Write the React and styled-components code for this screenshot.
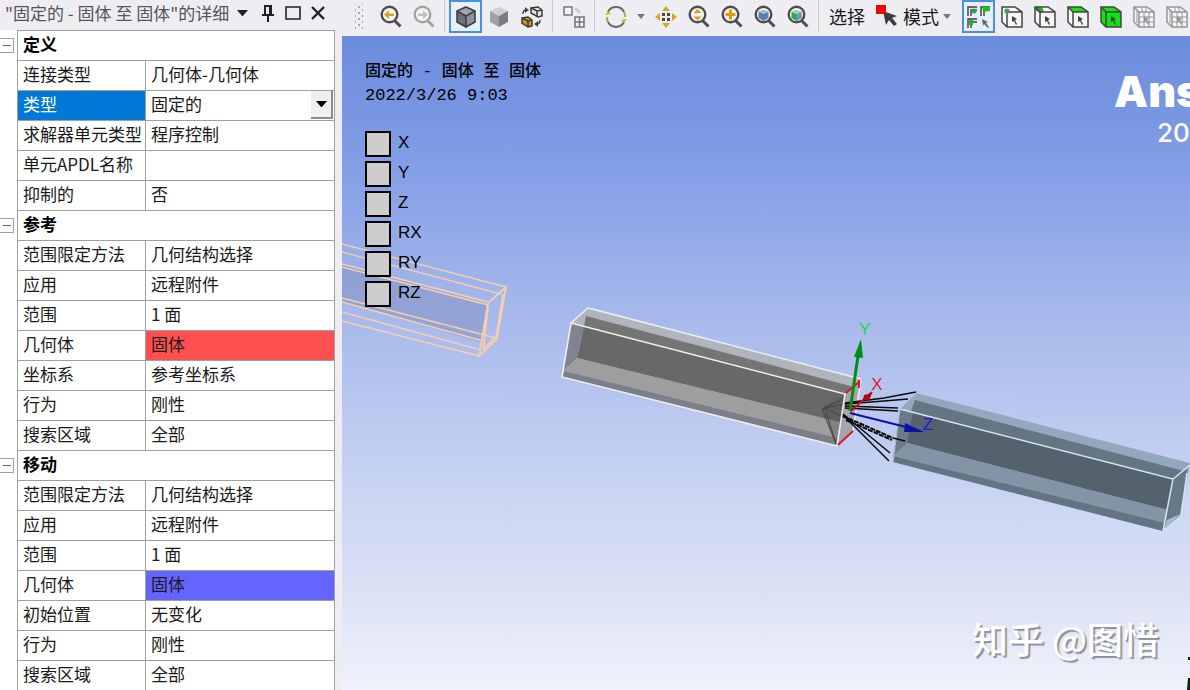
import React, { Component } from 'react'
import styled, { createGlobalStyle } from 'styled-components'

const GlobalStyle = createGlobalStyle`
  * {
    box-sizing: border-box;
  }
  body {
    margin: 0;
    background: #eeeef2;
    color: #1a1a1a;
    font-family: "Noto Sans CJK SC", "Liberation Sans", sans-serif;
  }
  button, select, input {
    font: inherit;
    color: inherit;
    margin: 0;
    padding: 0;
    border: 0;
    background: none;
  }
`

const Window = styled.div`
  display: grid;
  grid-template-columns: 342px minmax(0, 1fr);
  height: 100vh;
  overflow: hidden;
`

const Panel = styled.aside`
  display: flex;
  flex-direction: column;
  min-height: 0;
  overflow: hidden;
`

const PanelHead = styled.header`
  display: flex;
  align-items: center;
  flex: none;
  height: 30px;
  padding: 0 12px 4px 5px;
`

const PanelTitle = styled.h1`
  flex: 1;
  min-width: 0;
  margin: 0;
  overflow: hidden;
  white-space: nowrap;
  font-size: 17px;
  font-weight: 400;
  line-height: 26px;
  color: #55555a;
`

const HeadButton = styled.button`
  display: flex;
  align-items: center;
  justify-content: center;
  flex: none;
  width: 25px;
  height: 26px;
`

const DetailBody = styled.div`
  flex: 1;
  width: 335px;
  background: #fff;
`

const DetailTable = styled.table`
  width: 100%;
  table-layout: fixed;
  border-collapse: separate;
  border-spacing: 0;
  font-size: 17px;
  line-height: 25px;
  white-space: nowrap;

  th, td {
    height: 30px;
    padding: 0 0 4px 5px;
    border: solid #a0a0a0;
    border-width: 1px 0 0 1px;
    text-align: left;
    font-weight: 400;
    overflow: hidden;
  }
  th:last-child, td:last-child {
    border-right-width: 1px;
  }
`

const GutterCell = styled.td`
  && {
    border: 0;
    padding: 0;
  }
`

const GroupCell = styled.th`
  && {
    font-weight: 700;
    color: #000;
  }
`

const NameCell = styled.th`
  && {
    background: ${props => props.$active ? '#0078d7' : '#fff'};
    color: ${props => props.$active ? '#fff' : 'inherit'};
  }
`

const ValueCell = styled.td`
  background: ${props => props.$color || '#fff'};
`

const Toggle = styled.button`
  display: flex;
  align-items: center;
  justify-content: center;
  width: 14px;
  height: 15px;
  border: 1px solid #a0a0a0;
  border-left: 0;

  &::before {
    content: '';
    width: 8px;
    height: 1px;
    background: #666;
  }
`

const SelectBox = styled.div`
  display: flex;
  position: relative;

  select {
    flex: 1;
    height: 25px;
    appearance: none;
    outline: none;
  }
`

const SelectArrow = styled.span`
  position: absolute;
  top: 0;
  right: 1px;
  display: flex;
  align-items: center;
  justify-content: center;
  width: 22px;
  height: 28px;
  background: #f0f0f0;
  border: solid #8c8c8c;
  border-width: 0 2px 2px 0;
  pointer-events: none;
`

const Main = styled.main`
  display: flex;
  flex-direction: column;
  min-width: 0;
`

const Toolbar = styled.div`
  display: flex;
  flex: none;
  height: 36px;
  padding-left: 13px;
  overflow: hidden;
`

const Grip = styled.span`
  flex: none;
  width: 8px;
  height: 26px;
  margin: 4px 11px 0 0;
  background:
    radial-gradient(circle, #a8a8ad 1px, transparent 1px) 0 0 / 8px 6px,
    radial-gradient(circle, #a8a8ad 1px, transparent 1px) 4px 3px / 8px 6px;
`

const ToolButton = styled.button`
  display: flex;
  align-items: center;
  justify-content: center;
  flex: none;
  width: 33px;
  height: 33px;
  ${props => props.$active && `
    background: #e6effa;
    border: 2px solid #4a90e0;
  `}
`

const CaretButton = styled(ToolButton)`
  width: 17px;
`

const Separator = styled.span`
  flex: none;
  width: 1px;
  height: 32px;
  margin: 0 4px;
  background: #c9c9ce;
`

const ToolText = styled.span`
  flex: none;
  padding: 0 6px;
  font-size: 18px;
  line-height: 32px;
`

const ModeButton = styled.button`
  display: flex;
  align-items: center;
  flex: none;
  gap: 4px;
  width: 91px;
  height: 32px;
  padding-left: 4px;
  font-size: 18px;
  line-height: 32px;
  white-space: nowrap;
`

const Viewport = styled.section`
  position: relative;
  flex: 1;
  min-height: 0;
  overflow: hidden;
  background: linear-gradient(#6b8bdc, #7f9be5 17%, #a3b6eb 40%, #c5d1f2 66%, #dce3f5 86%, #f0f1fb);
`

const Scene = styled.svg`
  position: absolute;
  inset: 0;
  width: 100%;
  height: 100%;
`

const Annotation = styled.div`
  position: relative;
  padding: 24px 0 0 23px;
  color: #000;
`

const AnnotationTitle = styled.h2`
  margin: 0;
  font: 500 16px/24px "Liberation Mono", "Noto Sans CJK SC", monospace;
`

const AnnotationDate = styled.p`
  margin: 0 0 23px;
  font: 17px/24px "Liberation Mono", monospace;
`

const Dof = styled.label`
  display: flex;
  gap: 7px;
  height: 30px;
  font-family: "Liberation Sans", sans-serif;
  font-size: 17px;
  line-height: 23px;

  input {
    appearance: none;
    width: 26px;
    height: 26px;
    border: 2px solid #000;
    background: #cdcdcd;
  }
`

const Brand = styled.div`
  position: absolute;
  top: 28px;
  right: 0;
  width: 76px;
  color: #fff;
  font-family: Inter, sans-serif;
  white-space: nowrap;

  strong {
    display: block;
    font-size: 43px;
    font-weight: 900;
    line-height: 54px;
  }
  span {
    display: block;
    padding-left: 43px;
    font-size: 26px;
    font-weight: 500;
    line-height: 30px;
  }
`

const Watermark = styled.div`
  position: absolute;
  right: 31px;
  bottom: 25px;
  color: #fff;
  font-size: 36px;
  font-weight: 500;
  line-height: 54px;
  text-shadow: 2px 2px 1px #8d919c;
`

const Caret = ({ size = 8, color = '#77777c' }) => (
  <svg width={size} height={size / 2 + 1} viewBox="0 0 8 5" preserveAspectRatio="none" aria-hidden="true">
    <path d="M0 0h8L4 5z" fill={color} />
  </svg>
)

const Icon = ({ children }) => (
  <svg width="24" height="24" viewBox="0 0 24 24" fill="none" aria-hidden="true">{children}</svg>
)

const Lens = ({ color = '#4a4d52', children }) => (
  <Icon>
    <path d="M15.5 15.5l6 6" stroke={color} strokeWidth="3" />
    <circle cx="10.5" cy="9.5" r="7.8" fill="#f4f3ee" stroke={color} strokeWidth="2.4" />
    {children}
  </Icon>
)

const Pointer = ({ color = '#444' }) => (
  <path d="M12 11l5 3-2 1 2 4-1 1-2-4-2 1z" fill={color} />
)

// cube of the selection filters, the picked entity is painted green
const PickCube = ({ pick, muted, many }) => {
  const line = muted ? '#96969a' : '#444'
  const green = '#12e312'
  return (
    <Icon>
      <path d="M2 2h13l7 5v15H7l-5-5z" fill={pick === 'body' ? green : '#f7f7f7'} />
      {pick === 'face' && <path d="M2 2h13l7 5H7z" fill={green} />}
      {pick === 'edge' && <path d="M2 2h7l2 5-4 1-5-3z" fill="#24b524" />}
      <path d="M2 2h13l7 5v15H7l-5-5zM7 7v15M7 7h15M15 2l7 5" stroke={line} strokeWidth="1.5" />
      {pick === 'vertex' ? <circle cx="7" cy="6" r="2.6" fill="#3f9f55" /> : <path d="M2 2l5 5" stroke={line} strokeWidth="1.5" />}
      {many && <path d="M5 5v13M10 3v4M14 3v4M12 7v15M17 7v15M7 12h15M7 17h15" stroke={line} />}
      <Pointer color={line} />
    </Icon>
  )
}

const Cube = ({ top, left, right, line }) => (
  <Icon>
    <path d="M12 2l9 4-9 5-9-5z" fill={top} />
    <path d="M3 6l9 5v11l-9-5z" fill={left} />
    <path d="M21 6l-9 5v11l9-5z" fill={right} />
    {line && <path d="M12 2l9 4v11l-9 5-9-5V6zM3 6l9 5 9-5M12 11v11" stroke={line} strokeWidth="1.6" />}
  </Icon>
)

const PrevViewIcon = () => <Lens><path d="M5 9.500l5-4v3h5v2.500h-5v3z" fill="#dba21c" /></Lens>
const NextViewIcon = () => <Lens color="#a3a3a6"><path d="M16 9.500l-5-4v3H6v2.500h5v3z" fill="#bfbfc2" /></Lens>
const ZoomIcon = () => <Lens><path d="M10.500 4l4 4h-8zM10.500 15.500l4-4h-8z" fill="#d4a017" /></Lens>
const ZoomInIcon = () => <Lens><path d="M10.500 4.500v10M5.500 9.500h10" stroke="#e09a12" strokeWidth="3" /></Lens>
const ZoomFitIcon = () => (
  <Lens>
    <path d="M5.500 7l5-2 5 2v6l-5 3-5-3z" fill="#5c7fae" />
    <path d="M5.500 7l5-2 5 2-5 2z" fill="#a4bad8" />
  </Lens>
)
const ZoomSelectedIcon = () => (
  <Lens>
    <path d="M5.500 7l5-2 5 2v6l-5 3-5-3z" fill="#28ad4b" />
    <path d="M10.500 9l5-2v6l-5 3z" fill="#7894bc" />
    <path d="M5.500 7l5-2 5 2-5 2z" fill="#a4cdb6" />
  </Lens>
)

const RandomColorIcon = () => (
  <Icon>
    <path d="M11 3l7-1 4 3v6l-4 1-7-4z" fill="#e6e6e6" stroke="#3c3c3c" strokeWidth="1.5" />
    <path d="M11 3l6 3 5-1M17 6v5" stroke="#3c3c3c" strokeWidth="1.5" />
    <path d="M2 13l6-1 4 3v6l-4 1-6-4z" fill="#c99a1c" stroke="#3c3c3c" strokeWidth="1.5" />
    <path d="M2 13l6 3 4-1M8 16v6" stroke="#3c3c3c" strokeWidth="1.5" />
    <path d="M3 9c0-3 1-4 3-4M20 15c0 3-1 4-3 4" stroke="#444" strokeWidth="1.5" />
    <path d="M5 2l4 3-4 3zM18 16l-4 3 4 3z" fill="#444" />
  </Icon>
)

const ViewportsIcon = () => (
  <Icon>
    <path d="M2 2h8v8H2z" fill="#f4f4f4" stroke="#77777a" strokeWidth="1.5" />
    <path d="M13 12h9v10h-9zM13 17h9M17.500 12v10" fill="#f4f4f4" stroke="#77777a" strokeWidth="1.6" />
    <path d="M13 3l5 5" stroke="#d0d0d3" strokeWidth="3" />
  </Icon>
)

const RotateIcon = () => (
  <Icon>
    <path d="M4 7a9 9 0 0 1 16 0M20 17a9 9 0 0 1-16 0" stroke="#65676c" strokeWidth="2" />
    <path d="M20 7a9 9 0 0 1 1 5M4 17a9 9 0 0 1-1-5" stroke="#b5a05c" strokeWidth="2" />
    <path d="M1 10l3-4 3 3zM23 14l-3 4-3-3z" fill="#e0ad28" />
  </Icon>
)

const PanIcon = () => (
  <Icon>
    <path d="M12 1l4 5H8zM12 23l4-5H8zM1 12l5-4v8zM23 12l-5-4v8z" fill="#d1a72a" />
    <path d="M8 8h3v3H8zM13 8h3v3h-3zM8 13h3v3H8zM13 13h3v3h-3z" fill="#45474c" />
    <path d="M11 7h2v10h-2zM7 11h10v2H7z" fill="#f3efe0" />
  </Icon>
)

const AutoPickIcon = () => (
  <Icon>
    <path d="M1 11V2h9M4 11V5h6M14 11V2h9M17 11V5h6M1 23v-9h9M4 23v-6h6" stroke="#3c3c3c" strokeWidth="1.4" />
    <circle cx="7" cy="6" r="2.5" fill="#2f9e4a" />
    <path d="M15 2h8v4l-7 1z" fill="#12c912" />
    <path d="M2 15h4v5H2z" fill="#24b524" />
    <path d="M15 14l6 3-2 1 3 4-1 1-4-4-1 2z" fill="#666" />
  </Icon>
)

const ModeIcon = () => (
  <svg width="24" height="24" viewBox="0 0 24 24" aria-hidden="true">
    <path d="M8 7l14 5-5 2 5 6-3 2-5-6-3 5z" fill="#3c3c3c" />
    <path d="M1 1h10v9H1z" fill="#f00808" />
  </svg>
)

const viewTools = [
  [
    { label: '上一视图', icon: <PrevViewIcon /> },
    { label: '下一视图', icon: <NextViewIcon /> }
  ],
  [
    { label: '带边着色外表面', icon: <Cube top="#a4a7aa" left="#6c6f73" right="#909396" line="#3e4043" />, active: true },
    { label: '着色外表面', icon: <Cube top="#cfcfd1" left="#a0a0a3" right="#7d7d80" /> },
    { label: '随机颜色', icon: <RandomColorIcon /> }
  ],
  [
    { label: '视区', icon: <ViewportsIcon /> }
  ],
  [
    { label: '旋转', icon: <RotateIcon />, menu: true },
    { label: '平移', icon: <PanIcon /> },
    { label: '缩放', icon: <ZoomIcon /> },
    { label: '框选缩放', icon: <ZoomInIcon /> },
    { label: '缩放至合适', icon: <ZoomFitIcon /> },
    { label: '缩放至选定', icon: <ZoomSelectedIcon /> }
  ]
]

const pickTools = [
  { label: '智能选择', icon: <AutoPickIcon /> },
  { label: '顶点', icon: <PickCube pick="vertex" /> },
  { label: '边', icon: <PickCube pick="edge" /> },
  { label: '面', icon: <PickCube pick="face" /> },
  { label: '体', icon: <PickCube pick="body" /> },
  { label: '节点', icon: <PickCube muted many /> },
  { label: '单元', icon: <PickCube muted many /> }
]

const groups = [
  {
    title: '定义',
    rows: [
      { name: '连接类型', value: '几何体-几何体' },
      { name: '类型', options: ['固定的', '回转副', '圆柱形', '平移', '球形'] },
      { name: '求解器单元类型', value: '程序控制' },
      { name: '单元APDL名称', value: '' },
      { name: '抑制的', value: '否' }
    ]
  },
  {
    title: '参考',
    rows: [
      { name: '范围限定方法', value: '几何结构选择' },
      { name: '应用', value: '远程附件' },
      { name: '范围', value: '1 面' },
      { name: '几何体', value: '固体', color: '#ff5050' },
      { name: '坐标系', value: '参考坐标系' },
      { name: '行为', value: '刚性' },
      { name: '搜索区域', value: '全部' }
    ]
  },
  {
    title: '移动',
    rows: [
      { name: '范围限定方法', value: '几何结构选择' },
      { name: '应用', value: '远程附件' },
      { name: '范围', value: '1 面' },
      { name: '几何体', value: '固体', color: '#6464ff' },
      { name: '初始位置', value: '无变化' },
      { name: '行为', value: '刚性' },
      { name: '搜索区域', value: '全部' }
    ]
  }
]

const dofs = ['X', 'Y', 'Z', 'RX', 'RY', 'RZ']

const Model = () => (
  <Scene viewBox="342 36 848 654" preserveAspectRatio="xMinYMin slice" role="img" aria-label="几何模型">
    {/* ground body, wireframe */}
    <path d="M342 265L488 304L483 343L342 301z" fill="#8795c6" opacity=".6" />
    <g fill="none" stroke="#f3cfae" strokeWidth="1.3">
      <path d="M342 244L506 287M342 252L501 294M342 264L488 302M342 267L488 305" />
      <path d="M342 298L496 338M342 302L483 341M342 312L481 350M342 321L479 356" />
      <path d="M506 287L488 303L479 356L497 339zM503 294L496 339M488 307L483 350M484 348L497 336" strokeWidth="1.8" />
    </g>

    {/* reference body */}
    <path d="M588 308L861 379L853 430L837 446L562 377L571 323z" fill="#b0b4bd" />
    <path d="M586 316L858 388L845 396L584 326z" fill="#757575" />
    <path d="M584 326L845 395L840 423L577 358z" fill="#686868" />
    <path d="M571 323L584 327L577 358L563 371z" fill="#80848e" />
    <path d="M577 358L840 422L837 438L564 371z" fill="#9e9e9e" />
    <path d="M564 371L838 438L837 446L562 377z" fill="#7c7f88" />
    <path d="M845 394L861 380L853 430L837 446z" fill="#a2a5ad" />
    <path d="M822 407L845 395L842 422L836 444z" fill="#4c4c4c" opacity=".35" />
    <path d="M845 404L822 409L836 444L825 408L845 418M822 409L841 400" fill="none" stroke="#444" />
    <path d="M571 323L588 308L861 379M571 323L562 377L837 446L845 394zM861 380L853 430" fill="none" stroke="#ededed" strokeWidth="1.6" />
    <path d="M846 393L860 381M838 445L853 431M859 380v8" fill="none" stroke="#e01820" strokeWidth="2" />

    {/* mobile body */}
    <path d="M916 393L1190 463L1181 516L1163 531L893 462L900 409z" fill="#93a8bd" />
    <path d="M915 400L1184 471L1173 479L911 411z" fill="#657584" />
    <path d="M911 411L1173 479L1168 510L907 443z" fill="#55626e" />
    <path d="M900 409L913 412L907 443L893 458z" fill="#6b7b8c" />
    <path d="M907 443L1168 510L1165 523L893 456z" fill="#8294a6" />
    <path d="M893 456L1165 523L1163 531L893 462z" fill="#647485" />
    <path d="M1173 479L1188 466L1180 514L1163 531z" fill="#677889" />
    <path d="M1167 520L1180 514L1163 531z" fill="#a7bccd" />
    <path d="M900 409L1173 479L1163 531M1173 479L1190 465M1187 473L1181 516L1163 531" fill="none" stroke="#cfe6ef" strokeWidth="1.5" />
    <path d="M900 409L893 462M900 409L916 393" fill="none" stroke="#b0c3d5" />

    {/* links between the bodies */}
    <g fill="none" stroke="#0a0a0a" strokeWidth="1.5">
      <path d="M845 403L884 398L916 392M845 404L884 401L908 399M845 406L898 408M845 408L898 411" />
      <path d="M843 415L889 461M843 414L890 453M905 441L893 438" />
      <path d="M843 416L893 438M846 420L892 440" strokeWidth="2" strokeDasharray="5 1" />
    </g>

    {/* joint coordinate system */}
    <path d="M850 411L858 356" stroke="#068c14" strokeWidth="3" />
    <path d="M861 339L863 358L854 357z" fill="#068c14" />
    <path d="M851 411L872 392" stroke="#d00c14" strokeWidth="2" />
    <path d="M864 395L872 393L869 401L863 400z" fill="#b00810" />
    <path d="M850 413L906 427" stroke="#0a12a8" strokeWidth="2.2" />
    <path d="M905 423L924 432L904 432z" fill="#0a12a8" />
    <g fontFamily="Liberation Sans, sans-serif" fontSize="17" textAnchor="middle">
      <text x="865" y="335" fill="#16d84a">Y</text>
      <text x="877" y="390" fill="#e8182c">X</text>
      <text x="928" y="430" fill="#1418e0">Z</text>
    </g>
    <path d="M1188 657h2v3h-2zM1188 678h2v12h-3z" fill="#06280c" />
  </Scene>
)

class App extends Component {

  state = {
    jointType: '固定的',
    activeRow: '类型',
    pick: '智能选择',
    closed: {}
  }

  _toggleGroup = (title) => {
    this.setState({ closed: { ...this.state.closed, [title]: !this.state.closed[title] } })
  }

  _showRow = (row) => {
    return (
      <tr key={row.name} onClick={() => this.setState({ activeRow: row.name === '类型' ? '类型' : null })}>
        <GutterCell />
        <NameCell scope="row" $active={row.name === this.state.activeRow}>{row.name}</NameCell>
        <ValueCell $color={row.color}>
          {
            row.options ?
              <SelectBox>
                <select
                  aria-label={row.name}
                  value={this.state.jointType}
                  onChange={(e) => this.setState({ jointType: e.target.value })}
                >
                  {row.options.map(item => <option key={item}>{item}</option>)}
                </select>
                <SelectArrow><Caret size={11} color="#000" /></SelectArrow>
              </SelectBox>
              :
              row.value
          }
        </ValueCell>
      </tr>
    )
  }

  _showGroup = (group) => {
    return (
      <tbody key={group.title}>
        <tr>
          <GutterCell>
            <Toggle aria-label={group.title} onClick={() => this._toggleGroup(group.title)} />
          </GutterCell>
          <GroupCell colSpan={2}>{group.title}</GroupCell>
        </tr>
        {!this.state.closed[group.title] && group.rows.map(this._showRow)}
      </tbody>
    )
  }

  _showPanel = () => {
    return (
      <Panel>
        <PanelHead>
          <PanelTitle>"固定的 - 固体 至 固体"的详细信息</PanelTitle>
          <HeadButton aria-label="菜单"><Caret size={11} color="#222" /></HeadButton>
          <HeadButton aria-label="固定">
            <svg width="14" height="18" viewBox="0 0 14 18" fill="none" stroke="#222" strokeWidth="2">
              <path d="M4 11V2h6v9M1 11h12M7 11v7M9 2v9" />
            </svg>
          </HeadButton>
          <HeadButton aria-label="最大化">
            <svg width="16" height="14" viewBox="0 0 16 14" fill="none" stroke="#222">
              <path d="M1 1h14v12H1z" strokeWidth="1.6" />
            </svg>
          </HeadButton>
          <HeadButton aria-label="关闭">
            <svg width="14" height="14" viewBox="0 0 14 14" stroke="#222" strokeWidth="2.4">
              <path d="M1 1l12 12M13 1L1 13" />
            </svg>
          </HeadButton>
        </PanelHead>
        <DetailBody>
          <DetailTable>
            <colgroup>
              <col width="17" />
              <col width="128" />
              <col />
            </colgroup>
            {groups.map(this._showGroup)}
          </DetailTable>
        </DetailBody>
      </Panel>
    )
  }

  _showToolbar = () => {
    return (
      <Toolbar role="toolbar">
        <Grip />
        {viewTools.map((tools, index) => (
          <React.Fragment key={index}>
            {tools.map(item => (
              <React.Fragment key={item.label}>
                <ToolButton aria-label={item.label} $active={item.active}>{item.icon}</ToolButton>
                {item.menu && <CaretButton aria-label={item.label + '选项'}><Caret /></CaretButton>}
              </React.Fragment>
            ))}
            <Separator />
          </React.Fragment>
        ))}
        <ToolText>选择</ToolText>
        <ModeButton>
          <ModeIcon />
          模式
          <Caret />
        </ModeButton>
        {pickTools.map(item => (
          <ToolButton
            key={item.label}
            aria-label={item.label}
            $active={item.label === this.state.pick}
            onClick={() => this.setState({ pick: item.label })}
          >
            {item.icon}
          </ToolButton>
        ))}
      </Toolbar>
    )
  }

  render() {
    return (
      <Window>
        <GlobalStyle />
        {this._showPanel()}
        <Main>
          {this._showToolbar()}
          <Viewport>
            <Model />
            <Annotation>
              <AnnotationTitle>固定的 - 固体 至 固体</AnnotationTitle>
              <AnnotationDate>2022/3/26 9:03</AnnotationDate>
              {dofs.map(item => (
                <Dof key={item}>
                  <input type="checkbox" />
                  {item}
                </Dof>
              ))}
            </Annotation>
            <Brand>
              <strong>Ans</strong>
              <span>20</span>
            </Brand>
            <Watermark>知乎 @图惜</Watermark>
          </Viewport>
        </Main>
      </Window>
    )
  }
}

export default App
